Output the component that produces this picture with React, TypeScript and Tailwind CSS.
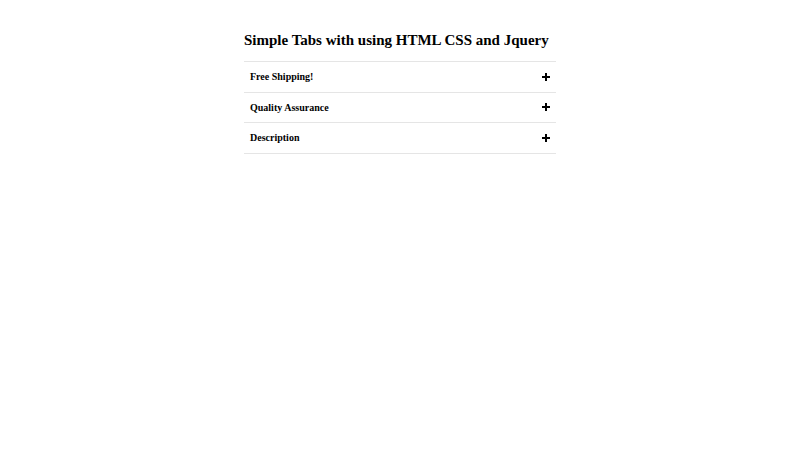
const items = ['Free Shipping!', 'Quality Assurance', 'Description'];

function PlusIcon() {
  return (
    <svg width="8" height="8" viewBox="0 0 8 8" className="block">
      <path d="M3 0h2v3h3v2H5v3H3V5H0V3h3z" fill="#000" />
    </svg>
  );
}

export default function App() {
  return (
    <div className="min-h-[450px] bg-white font-['Liberation_Serif',_'Times_New_Roman',_serif] text-black">
      <div className="mx-auto w-[312px] pt-[31px]">
        <h2 className="text-[15px] leading-[18px] font-bold">Simple Tabs with using HTML CSS and Jquery</h2>
        <div className="mt-[12px] border-t border-[#e5e5e5]">
          {items.map((item) => (
            <div
              key={item}
              className="flex h-[30.5px] items-center justify-between border-b border-[#e5e5e5] pl-[6px] pr-[6px]"
            >
              <span className="text-[10px] font-bold">{item}</span>
              <PlusIcon />
            </div>
          ))}
        </div>
      </div>
    </div>
  );
}
